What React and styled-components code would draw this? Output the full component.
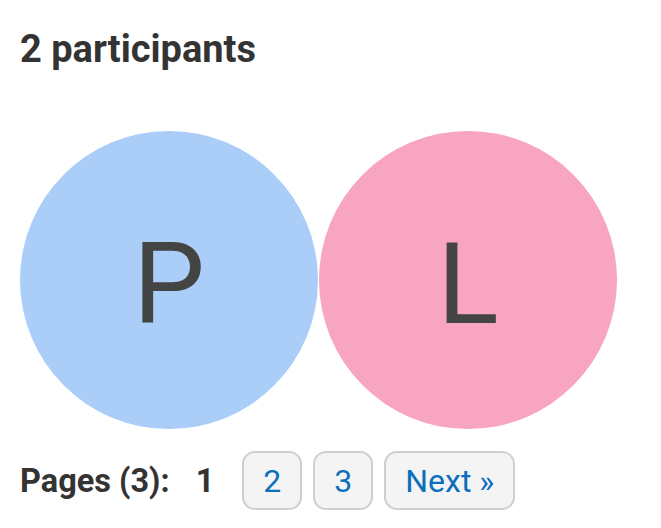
import React from "react";
import styled, { createGlobalStyle } from "styled-components";

const GlobalStyle = createGlobalStyle`
  html, body {
    margin: 0;
    padding: 0;
    background: #fff;
  }
  body {
    font-family: Roboto, "Liberation Sans", sans-serif;
    color: #333;
  }
`;

const Page = styled.div`
  padding: 27px 20px 0 20px;
`;

const Title = styled.h2`
  margin: 0 0 60px 0;
  font-size: 38px;
  font-weight: 700;
  line-height: 44px;
  color: #333;
`;

const Avatars = styled.div`
  display: flex;
  gap: 1px;
`;

const Avatar = styled.div`
  width: 298px;
  height: 298px;
  box-sizing: border-box;
  padding-top: 8px;
  border-radius: 50%;
  background: ${p => p.color};
  display: flex;
  align-items: center;
  justify-content: center;
  font-size: 114px;
  font-weight: 400;
  color: #444;
  line-height: 1;
`;

const Pager = styled.div`
  display: flex;
  align-items: center;
  margin-top: 22px;
  font-size: 32.5px;
  font-weight: 700;
  color: #333;
`;

const Label = styled.span`
  margin-right: 26px;
`;

const Current = styled.span`
  margin-right: 28px;
`;

const PageButton = styled.a`
  display: flex;
  align-items: center;
  justify-content: center;
  min-width: 58px;
  height: 59px;
  box-sizing: border-box;
  padding: 0 19px;
  margin-right: 11px;
  border: 2.5px solid #cfcfcf;
  border-radius: 13px;
  background: #f4f4f4;
  color: #0b6fbd;
  font-size: 32px;
  font-weight: 400;
  text-decoration: none;
`;

const people = [
  { initial: "P", color: "#abcef8" },
  { initial: "L", color: "#f7a5c0" },
];

export default function App() {
  return (
    <>
      <GlobalStyle />
      <Page>
        <Title>2 participants</Title>
        <Avatars>
          {people.map(p => (
            <Avatar key={p.initial} color={p.color}>{p.initial}</Avatar>
          ))}
        </Avatars>
        <Pager>
          <Label>Pages (3):</Label>
          <Current>1</Current>
          <PageButton href="#">2</PageButton>
          <PageButton href="#">3</PageButton>
          <PageButton href="#">Next »</PageButton>
        </Pager>
      </Page>
    </>
  );
}
